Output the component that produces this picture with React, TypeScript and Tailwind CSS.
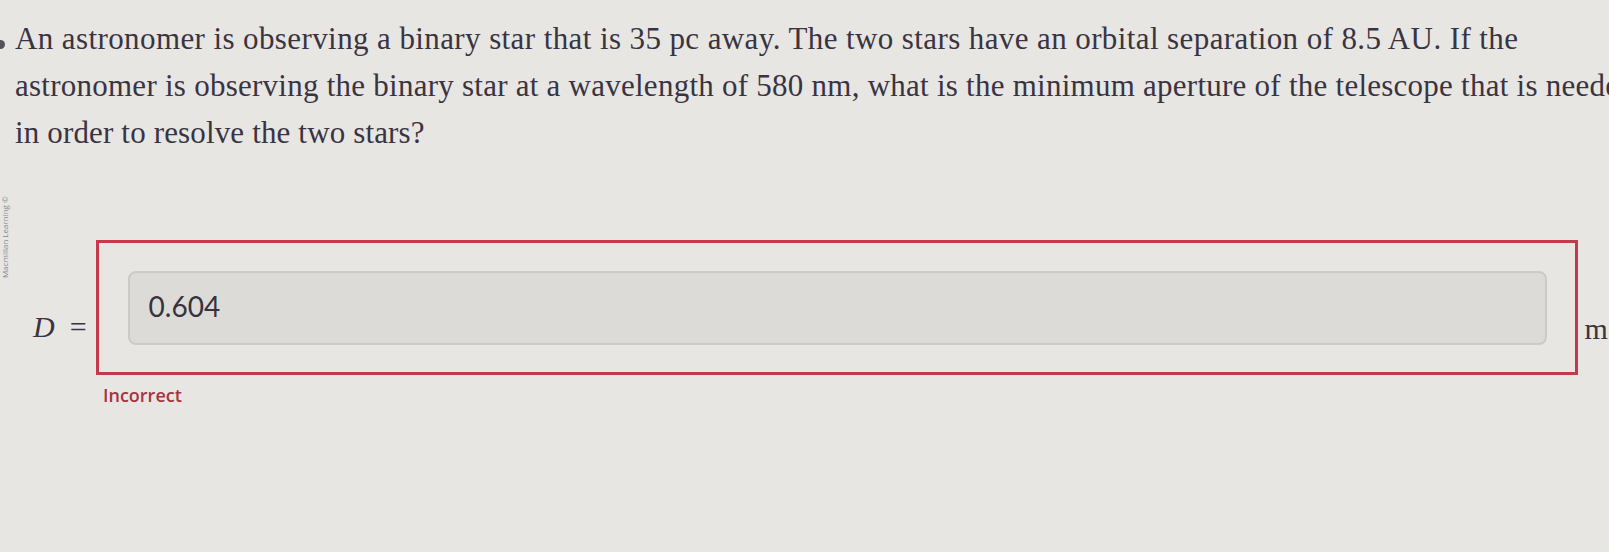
import React from "react";

export default function App() {
  return (
    <div className="relative w-[1609px] h-[552px] overflow-hidden bg-[#e7e6e2] text-[#3a3442]" style={{ fontFamily: '"Liberation Serif", "Times New Roman", serif' }}>
      {/* faint vertical copyright text at the left edge */}
      <div className="absolute left-0 top-[150px] h-[130px] w-[9px]">
        <span
          className="absolute left-0 top-0 block origin-top-left whitespace-nowrap text-[8px] leading-[9px] text-[#8a8790]"
          style={{ fontFamily: '"Open Sans", sans-serif', transform: "translate(0px, 128px) rotate(-90deg)" }}
        >
          Macmillan Learning ©
        </span>
      </div>
      <div className="absolute left-[-4px] top-[40px] h-[9px] w-[9px] rounded-full bg-[#55515a]" />

      <div className="pl-[15px] pt-[15px] text-[31px] leading-[47px] whitespace-nowrap">
        <div className="tracking-[0.4px]">An astronomer is observing a binary star that is 35 pc away. The two stars have an orbital separation of 8.5 AU. If the</div>
        <div className="tracking-[0.25px]">astronomer is observing the binary star at a wavelength of 580 nm, what is the minimum aperture of the telescope that is needed</div>
        <div className="tracking-[0.15px]">in order to resolve the two stars?</div>
      </div>

      <div className="mt-[84px] flex items-start pl-[33px]">
        <div className="mt-[72px] flex items-start text-[30px] leading-[30px]">
          <span className="italic">D</span>
          <span className="ml-[15px]">=</span>
        </div>
        <div className="ml-[9px] h-[135px] w-[1482px] border-[3px] border-[#c33a4d] pl-[29px] pr-[28px] pt-[28px]">
          <div
            className="h-[74px] rounded-[8px] border-2 border-[#cbcac6] bg-[#dcdbd7] pl-[19px] pt-[15px] text-[28px] leading-[36px] text-[#37323f]"
            style={{ fontFamily: "Lato, sans-serif" }}
          >
            0.604
          </div>
        </div>
        <span className="ml-[7px] mt-[74px] text-[30px] leading-[30px]">m</span>
      </div>

      <div
        className="ml-[103px] mt-[8px] text-[18px] font-semibold leading-[24px] text-[#a8323f]"
        style={{ fontFamily: '"Open Sans", sans-serif' }}
      >
        Incorrect
      </div>
    </div>
  );
}
